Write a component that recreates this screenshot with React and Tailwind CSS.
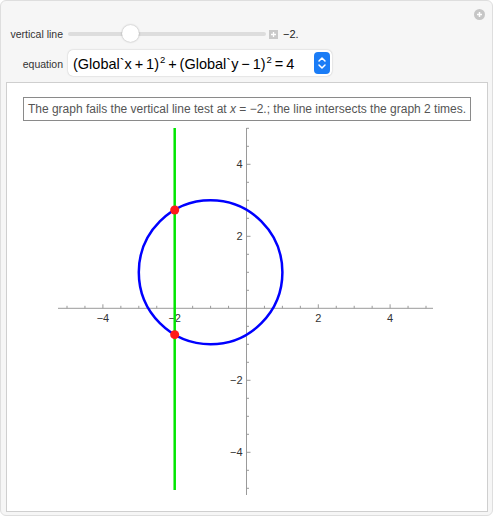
import React from 'react';

const font = { fontFamily: '"Liberation Sans", Arial, sans-serif' };

// plot mapping (page pixel coords)
const X = (u) => 246.5 + 35.9 * u;
const Y = (v) => 308.3 - 36 * v;

function Plot() {
  const ticks = [];
  for (let i = -10; i <= 10; i++) {
    if (i === 0) continue;
    ticks.push({ u: i / 2, major: i % 4 === 0 });
  }

  return (
    <svg viewBox="7 121 480 389" width="480" height="389" className="block">
      {/* axes */}
      <line x1="58" y1={Y(0)} x2="433" y2={Y(0)} stroke="#9a9a9a" strokeWidth="1" />
      <line x1={X(0)} y1="128" x2={X(0)} y2="495" stroke="#9a9a9a" strokeWidth="1" />
      {ticks.map((t) => (
        <line
          key={'x' + t.u}
          x1={X(t.u)}
          x2={X(t.u)}
          y1={Y(0)}
          y2={Y(0) - (t.major ? 4 : 2.5)}
          stroke="#9a9a9a"
          strokeWidth="1"
        />
      ))}
      {ticks.map((t) => (
        <line
          key={'y' + t.u}
          x1={X(0)}
          x2={X(0) + (t.major ? 4 : 2.5)}
          y1={Y(t.u)}
          y2={Y(t.u)}
          stroke="#9a9a9a"
          strokeWidth="1"
        />
      ))}
      {[-4, -2, 2, 4].map((u) => (
        <text key={'lx' + u} x={X(u)} y={Y(0) + 13.5} textAnchor="middle" fontSize="11" fill="#333" style={font}>
          {u < 0 ? '\u2212' + -u : u}
        </text>
      ))}
      {[-4, -2, 2, 4].map((v) => (
        <text key={'ly' + v} x={X(0) - 4} y={Y(v) + 4} textAnchor="end" fontSize="11" fill="#333" style={font}>
          {v < 0 ? '\u2212' + -v : v}
        </text>
      ))}
      {/* circle */}
      <ellipse cx={X(-1)} cy={Y(1)} rx="71.8" ry="72" fill="none" stroke="#0000ff" strokeWidth="2.5" />
      {/* vertical line */}
      <line x1={X(-2)} y1="128" x2={X(-2)} y2="490" stroke="#00e600" strokeWidth="2.5" />
      {/* intersections */}
      <circle cx={X(-2)} cy={Y(1 + Math.sqrt(3))} r="4.5" fill="#ff1a1a" />
      <circle cx={X(-2)} cy={Y(1 - Math.sqrt(3))} r="4.5" fill="#ff1a1a" />
    </svg>
  );
}

export default function App() {
  return (
    <div className="w-[494px] h-[518px] bg-white" style={font}>
      <div className="relative w-[493px] h-[516px] rounded-md border border-[#dedede] bg-[#f6f6f6] pt-[24px]">
        {/* corner button */}
        <div className="absolute right-[7px] top-[8px] w-[11px] h-[11px] rounded-full bg-[#c6c6c6] flex items-center justify-center">
          <svg width="7" height="7" viewBox="0 0 7 7">
            <path d="M3.5 1v5M1 3.5h5" stroke="#fff" strokeWidth="1.5" />
          </svg>
        </div>

        {/* slider row */}
        <div className="flex items-center h-[18px]">
          <div className="w-[62px] text-right text-[10.5px] text-[#333] leading-none">vertical line</div>
          <div className="relative ml-[5px] w-[198px] h-[4px] rounded-full bg-[#dddddd]">
            <div className="absolute left-[54px] top-[-7px] w-[17px] h-[17px] rounded-full bg-white shadow-[0_0_2px_rgba(0,0,0,0.35)]" />
          </div>
          <div className="ml-[3px] w-[9px] h-[9px] bg-[#c9c9c9] flex items-center justify-center">
            <svg width="7" height="7" viewBox="0 0 7 7">
              <path d="M3.5 1v5M1 3.5h5" stroke="#fff" strokeWidth="1.3" />
            </svg>
          </div>
          <div className="ml-[5px] text-[11px] text-[#222] leading-none">−2.</div>
        </div>

        {/* equation row */}
        <div className="flex items-center mt-[7px] h-[26px]">
          <div className="w-[62px] text-right text-[10.5px] text-[#333] leading-none pt-[2px]">equation</div>
          <div className="ml-[5px] w-[264px] h-[26px] rounded-[5px] bg-white shadow-[0_0_1.5px_rgba(0,0,0,0.3)] flex items-center justify-between pl-[5px] pr-[2px]">
            <div className="text-[14.5px] text-black leading-none whitespace-nowrap flex items-start pt-[2px]">
              <span>(Global`x{'\u2009'}+{'\u2009'}1)</span>
              <span className="text-[9.5px] leading-none mt-[-2px] ml-[1px]">2</span>
              <span>{'\u2009'}+{'\u2009'}(Global`y{'\u2009'}−{'\u2009'}1)</span>
              <span className="text-[9.5px] leading-none mt-[-2px] ml-[1px]">2</span>
              <span>{'\u2009'}={'\u2009'}4</span>
            </div>
            <div className="w-[16px] h-[22px] rounded-[4px] bg-[#1a7cf6] flex items-center justify-center">
              <svg width="10" height="16" viewBox="0 0 10 16">
                <path d="M2 6l3-3 3 3M2 10l3 3 3-3" fill="none" stroke="#fff" strokeWidth="1.5" strokeLinecap="round" strokeLinejoin="round" />
              </svg>
            </div>
          </div>
        </div>

        {/* output panel */}
        <div className="mt-[6px] ml-[5px] w-[482px] h-[430px] border border-[#cfcfcf] bg-white flex flex-col items-center">
          <div className="mt-[14px] w-[448px] h-[24px] border border-[#8a8a8a] flex items-center justify-center text-[12px] text-[#555] whitespace-nowrap">
            The graph fails the vertical line test at&nbsp;<i>x</i>&nbsp;= −2.; the line intersects the graph 2 times.
          </div>
          <Plot />
        </div>
      </div>
    </div>
  );
}
